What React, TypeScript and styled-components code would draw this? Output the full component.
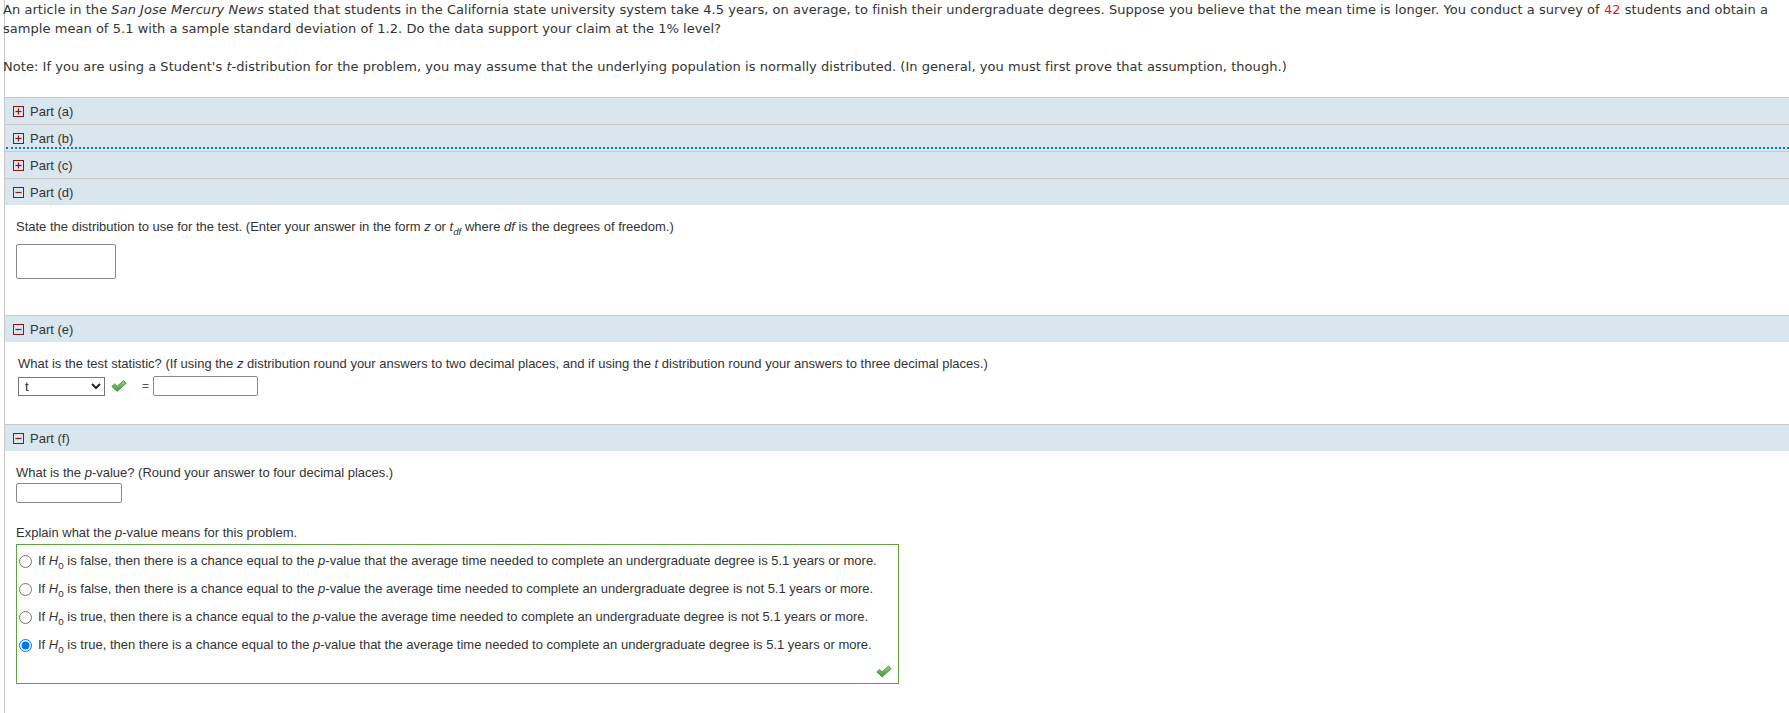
import React from "react";
import styled, { createGlobalStyle, css } from "styled-components";

const Global = createGlobalStyle`
  html, body { margin: 0; padding: 0; background: #fff; }
  * { box-sizing: border-box; }
`;

const Page = styled.div`
  margin-left: 4px;
  border-left: 1px solid #c8c8c8;
  min-height: 713px;
  color: #333;
`;

const Question = styled.div`
  margin-left: -2px;
  font-family: "DejaVu Sans", Verdana, sans-serif;
  font-size: 13px;
  letter-spacing: 0.04px;
  line-height: 19px;
  color: #333;
`;

const Para = styled.p<{ $mb?: number }>`
  margin: 0 0 ${(p) => p.$mb ?? 0}px 0;
`;

const Red = styled.span`
  color: #e8141b;
`;

const Parts = styled.div`
  margin-top: 21px;
`;

const PartHeader = styled.div<{ $focused?: boolean }>`
  position: relative;
  display: flex;
  align-items: center;
  gap: 6px;
  height: 27px;
  padding-left: 8px;
  border-top: 1px solid #c8c8c8;
  background: #d9e6ee;
  font-family: "Liberation Sans", Arial, sans-serif;
  font-size: 13px;
  color: #333;
  ${(p) =>
    p.$focused &&
    css`
      &::after {
        content: "";
        position: absolute;
        left: 1px;
        right: 0;
        bottom: 2px;
        border-bottom: 2px dotted #0a78d6;
      }
    `}
`;

const PartBody = styled.div<{ $pb: number; $pl?: number }>`
  padding: 14px 0 ${(p) => p.$pb}px ${(p) => p.$pl ?? 11}px;
  font-family: "Liberation Sans", Arial, sans-serif;
  font-size: 13px;
  line-height: 16px;
  color: #333;
`;

const Prompt = styled.div<{ $mt?: number }>`
  margin-top: ${(p) => p.$mt ?? 0}px;
  line-height: 16px;
`;

const Sub = styled.sub`
  font-size: 0.75em;
  vertical-align: -0.4em;
  line-height: 0;
`;

const TextBox = styled.input<{ $w: number; $h: number; $mt: number }>`
  display: block;
  width: ${(p) => p.$w}px;
  height: ${(p) => p.$h}px;
  margin: ${(p) => p.$mt}px 0 0 0;
  border: 1px solid #8a8a8a;
  border-radius: 2px;
  padding: 0 3px;
  font: 13px "Liberation Sans", Arial, sans-serif;
  background: #fff;
  outline: none;
`;

const AnswerRow = styled.div`
  display: flex;
  align-items: center;
  margin-top: 4px;
`;

const Select = styled.select`
  width: 87px;
  height: 19px;
  margin: 0;
  padding: 0 0 0 2px;
  border: 1px solid #767676;
  border-radius: 0;
  background: #fff;
  color: #222;
  font: 13px "Liberation Sans", Arial, sans-serif;
`;

const Equals = styled.span`
  margin: 0 4px 0 15px;
  font-size: 12px;
  color: #555;
`;

const InlineBox = styled.input`
  width: 105px;
  height: 20px;
  margin: 0;
  border: 1px solid #8a8a8a;
  border-radius: 2px;
  background: #fff;
  outline: none;
`;

const CheckWrap = styled.span<{ $ml?: number }>`
  display: inline-flex;
  margin-left: ${(p) => p.$ml ?? 0}px;
`;

const ChoiceBox = styled.div`
  width: 883px;
  margin-top: 3px;
  padding: 2px 0 0 1px;
  border: 1px solid #63a044;
`;

const Choice = styled.label`
  display: flex;
  align-items: center;
  gap: 6px;
  height: 28px;
  white-space: nowrap;
  cursor: pointer;
`;

const Radio = styled.input`
  width: 13px;
  height: 13px;
  margin: 0 0 0 1px;
  flex: none;
`;

const BoxFooter = styled.div`
  display: flex;
  justify-content: flex-end;
  align-items: center;
  height: 24px;
  padding-right: 6px;
`;

const Toggle = ({ open }: { open: boolean }) => (
  <svg width="11" height="11" viewBox="0 0 11 11" aria-hidden>
    <rect x="0.5" y="0.5" width="10" height="10" fill="none" stroke="#8b1414" />
    <path d="M2.5 5.5h6" stroke="#8b1414" strokeWidth="1.2" />
    {!open && <path d="M5.5 2.5v6" stroke="#8b1414" strokeWidth="1.2" />}
  </svg>
);

const Check = ({ h = 12 }: { h?: number }) => (
  <svg width="16" height={h} viewBox="0 0 16 12" aria-hidden>
    <defs>
      <linearGradient id="ck" x1="0" y1="0" x2="0" y2="1">
        <stop offset="0" stopColor="#8ad27c" />
        <stop offset="1" stopColor="#3f9c3a" />
      </linearGradient>
    </defs>
    <path
      d="M0.8 6.4 L3.6 3.9 L6.2 6.3 L12.4 0.6 L15.2 3.2 L6.2 11.4 Z"
      fill="url(#ck)"
      stroke="#3b8a35"
      strokeWidth="0.8"
      strokeLinejoin="round"
    />
  </svg>
);

const H0 = () => (
  <span>
    <i>H</i>
    <Sub>0</Sub>
  </span>
);

const options: { truth: string; rest: string }[] = [
  {
    truth: "false",
    rest: "that the average time needed to complete an undergraduate degree is 5.1 years or more.",
  },
  {
    truth: "false",
    rest: "the average time needed to complete an undergraduate degree is not 5.1 years or more.",
  },
  {
    truth: "true",
    rest: "the average time needed to complete an undergraduate degree is not 5.1 years or more.",
  },
  {
    truth: "true",
    rest: "that the average time needed to complete an undergraduate degree is 5.1 years or more.",
  },
];

export default function App() {
  return (
    <>
      <Global />
      <Page>
        <Question>
          <Para $mb={19}>
            An article in the <i>San Jose Mercury News</i> stated that students in the California
            state university system take 4.5 years, on average, to finish their undergraduate
            degrees. Suppose you believe that the mean time is longer. You conduct a survey of{" "}
            <Red>42</Red> students and obtain a sample mean of 5.1 with a sample standard deviation
            of 1.2. Do the data support your claim at the 1% level?
          </Para>
          <Para>
            Note: If you are using a Student's <i>t</i>-distribution for the problem, you may assume
            that the underlying population is normally distributed. (In general, you must first
            prove that assumption, though.)
          </Para>
        </Question>

        <Parts>
          <PartHeader>
            <Toggle open={false} />
            Part (a)
          </PartHeader>
          <PartHeader $focused>
            <Toggle open={false} />
            Part (b)
          </PartHeader>
          <PartHeader>
            <Toggle open={false} />
            Part (c)
          </PartHeader>
          <PartHeader>
            <Toggle open />
            Part (d)
          </PartHeader>
          <PartBody $pb={36}>
            <Prompt>
              State the distribution to use for the test. (Enter your answer in the form <i>z</i> or{" "}
              <i>t</i>
              <Sub>
                <i>df</i>
              </Sub>{" "}
              where <i>df</i> is the degrees of freedom.)
            </Prompt>
            <TextBox type="text" $w={100} $h={35} $mt={9} />
          </PartBody>

          <PartHeader>
            <Toggle open />
            Part (e)
          </PartHeader>
          <PartBody $pb={28} $pl={13}>
            <Prompt>
              What is the test statistic? (If using the <i>z</i> distribution round your answers to
              two decimal places, and if using the <i>t</i> distribution round your answers to three
              decimal places.)
            </Prompt>
            <AnswerRow>
              <Select defaultValue="t">
                <option value="t">t</option>
                <option value="z">z</option>
              </Select>
              <CheckWrap $ml={6}>
                <Check />
              </CheckWrap>
              <Equals>=</Equals>
              <InlineBox type="text" />
            </AnswerRow>
          </PartBody>

          <PartHeader>
            <Toggle open />
            Part (f)
          </PartHeader>
          <PartBody $pb={30}>
            <Prompt>
              What is the <i>p</i>-value? (Round your answer to four decimal places.)
            </Prompt>
            <TextBox type="text" $w={106} $h={20} $mt={2} />
            <Prompt $mt={22}>
              Explain what the <i>p</i>-value means for this problem.
            </Prompt>
            <ChoiceBox>
              {options.map((o, i) => (
                <Choice key={i}>
                  <Radio type="radio" name="pmeaning" defaultChecked={i === 3} />
                  <span>
                    If <H0 /> is {o.truth}, then there is a chance equal to the <i>p</i>-value{" "}
                    {o.rest}
                  </span>
                </Choice>
              ))}
              <BoxFooter>
                <Check h={13} />
              </BoxFooter>
            </ChoiceBox>
          </PartBody>
        </Parts>
      </Page>
    </>
  );
}
